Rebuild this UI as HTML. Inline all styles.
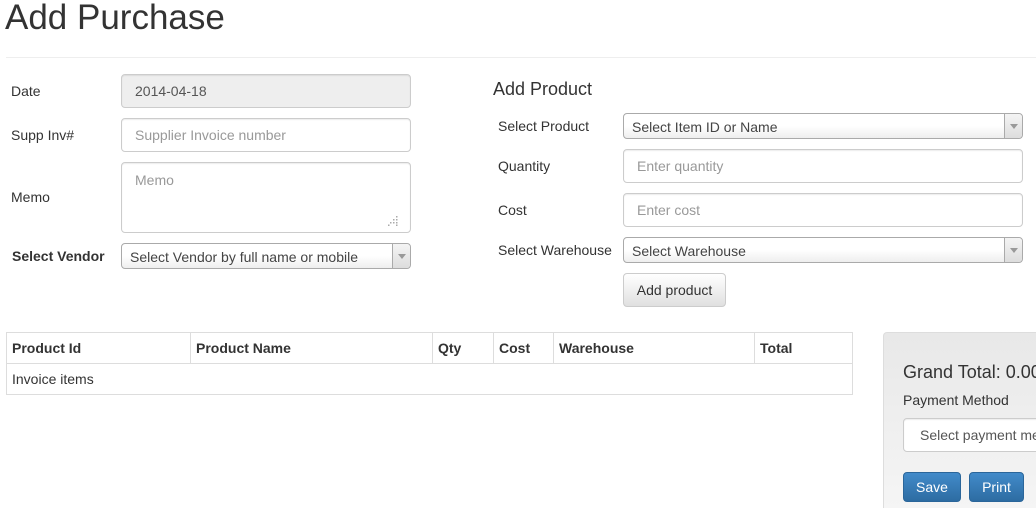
<!DOCTYPE html>
<html><head><meta charset="utf-8"><style>
*{box-sizing:border-box;margin:0;padding:0}
html,body{width:1036px;height:508px;overflow:hidden}
body{background:#fff;font-family:"Liberation Sans",Arial,sans-serif;font-size:14px;color:#333;position:relative}
.a{position:absolute;white-space:nowrap}
.inp{position:absolute;border:1px solid #ccc;border-radius:4px;background:#fff;color:#999;padding-left:13px;font-size:14px;box-shadow:inset 0 1px 1px rgba(0,0,0,.075);white-space:nowrap;overflow:hidden}
.sel{position:absolute;border:1px solid #aaa;border-radius:4px;background:linear-gradient(#fff 0%,#fff 50%,#eee 100%);color:#444;padding-left:8px;font-size:14px}
.sel .ar{position:absolute;right:0;top:0;bottom:0;width:18px;border-left:1px solid #aaa;background:linear-gradient(#f4f4f4,#ddd);border-radius:0 4px 4px 0}
.sel .ar:after{content:"";position:absolute;left:5px;top:50%;margin-top:-2px;border-left:4px solid transparent;border-right:4px solid transparent;border-top:5px solid #999}
.btn{position:absolute;border-radius:4px;text-align:center;font-size:14px}
table{position:absolute;left:6px;top:332px;width:847px;border-collapse:collapse}
td,th{border:1px solid #ddd;height:31px;padding:0 5px;text-align:left;font-size:14px}
</style></head><body>
<div class="a" style="left:5px;top:-2px;font-size:35px;color:#333">Add Purchase</div>
<div class="a" style="left:6px;top:57px;width:1030px;height:1px;background:#eee"></div>

<div class="a" style="left:11px;top:83px">Date</div>
<div class="inp" style="left:121px;top:74px;width:290px;height:34px;line-height:32px;background:#eee;color:#555">2014-04-18</div>
<div class="a" style="left:11px;top:127px">Supp Inv#</div>
<div class="inp" style="left:121px;top:118px;width:290px;height:34px;line-height:32px">Supplier Invoice number</div>
<div class="a" style="left:11px;top:189px">Memo</div>
<div class="inp" style="left:121px;top:162px;width:290px;height:71px;padding-top:8px;line-height:18px">Memo<svg style="position:absolute;right:12px;bottom:6px" width="10" height="10" viewBox="0 0 10 10" fill="#aaa"><rect x="8" y="0" width="1.5" height="1.5"/><rect x="5" y="3" width="1.5" height="1.5"/><rect x="8" y="3" width="1.5" height="1.5"/><rect x="2" y="6" width="1.5" height="1.5"/><rect x="5" y="6" width="1.5" height="1.5"/><rect x="8" y="6" width="1.5" height="1.5"/><rect x="0" y="8.5" width="1.5" height="1.5"/><rect x="8" y="8.5" width="1.5" height="1.5"/></svg></div>
<div class="a" style="left:12px;top:248px;font-weight:bold">Select Vendor</div>
<div class="sel" style="left:121px;top:243px;width:290px;height:26px;line-height:26px">Select Vendor by full name or mobile<span class="ar"></span></div>

<div class="a" style="left:493px;top:79px;font-size:18px">Add Product</div>
<div class="a" style="left:498px;top:118px">Select Product</div>
<div class="sel" style="left:623px;top:113px;width:400px;height:26px;line-height:26px">Select Item ID or Name<span class="ar"></span></div>
<div class="a" style="left:498px;top:158px">Quantity</div>
<div class="inp" style="left:623px;top:149px;width:400px;height:34px;line-height:32px">Enter quantity</div>
<div class="a" style="left:498px;top:202px">Cost</div>
<div class="inp" style="left:623px;top:193px;width:400px;height:34px;line-height:32px">Enter cost</div>
<div class="a" style="left:498px;top:242px">Select Warehouse</div>
<div class="sel" style="left:623px;top:237px;width:400px;height:26px;line-height:26px">Select Warehouse<span class="ar"></span></div>
<div class="btn" style="left:623px;top:273px;width:103px;height:34px;line-height:32px;border:1px solid #ccc;background:linear-gradient(#fff,#e0e0e0);color:#333">Add product</div>

<table>
<tr><th style="width:184px">Product Id</th><th style="width:242px">Product Name</th><th style="width:61px">Qty</th><th style="width:60px">Cost</th><th style="width:201px">Warehouse</th><th>Total</th></tr>
<tr><td colspan="6">Invoice items</td></tr>
</table>

<div class="a" style="left:883px;top:332px;width:170px;height:176px;border:1px solid #ddd;border-bottom:none;border-radius:4px 4px 0 0;background:linear-gradient(#e8e8e8,#f5f5f5)"></div>
<div class="a" style="left:903px;top:362px;font-size:18px">Grand Total: 0.00</div>
<div class="a" style="left:903px;top:392px">Payment Method</div>
<div class="inp" style="left:903px;top:418px;width:200px;height:34px;line-height:32px;padding-left:16px;color:#555">Select payment method</div>
<div class="btn" style="left:903px;top:472px;width:58px;height:30px;line-height:28px;background:linear-gradient(#428bca,#2d6ca2);border:1px solid #2b669a;color:#fff">Save</div>
<div class="btn" style="left:969px;top:472px;width:55px;height:30px;line-height:28px;background:linear-gradient(#428bca,#2d6ca2);border:1px solid #2b669a;color:#fff">Print</div>
</body></html>
